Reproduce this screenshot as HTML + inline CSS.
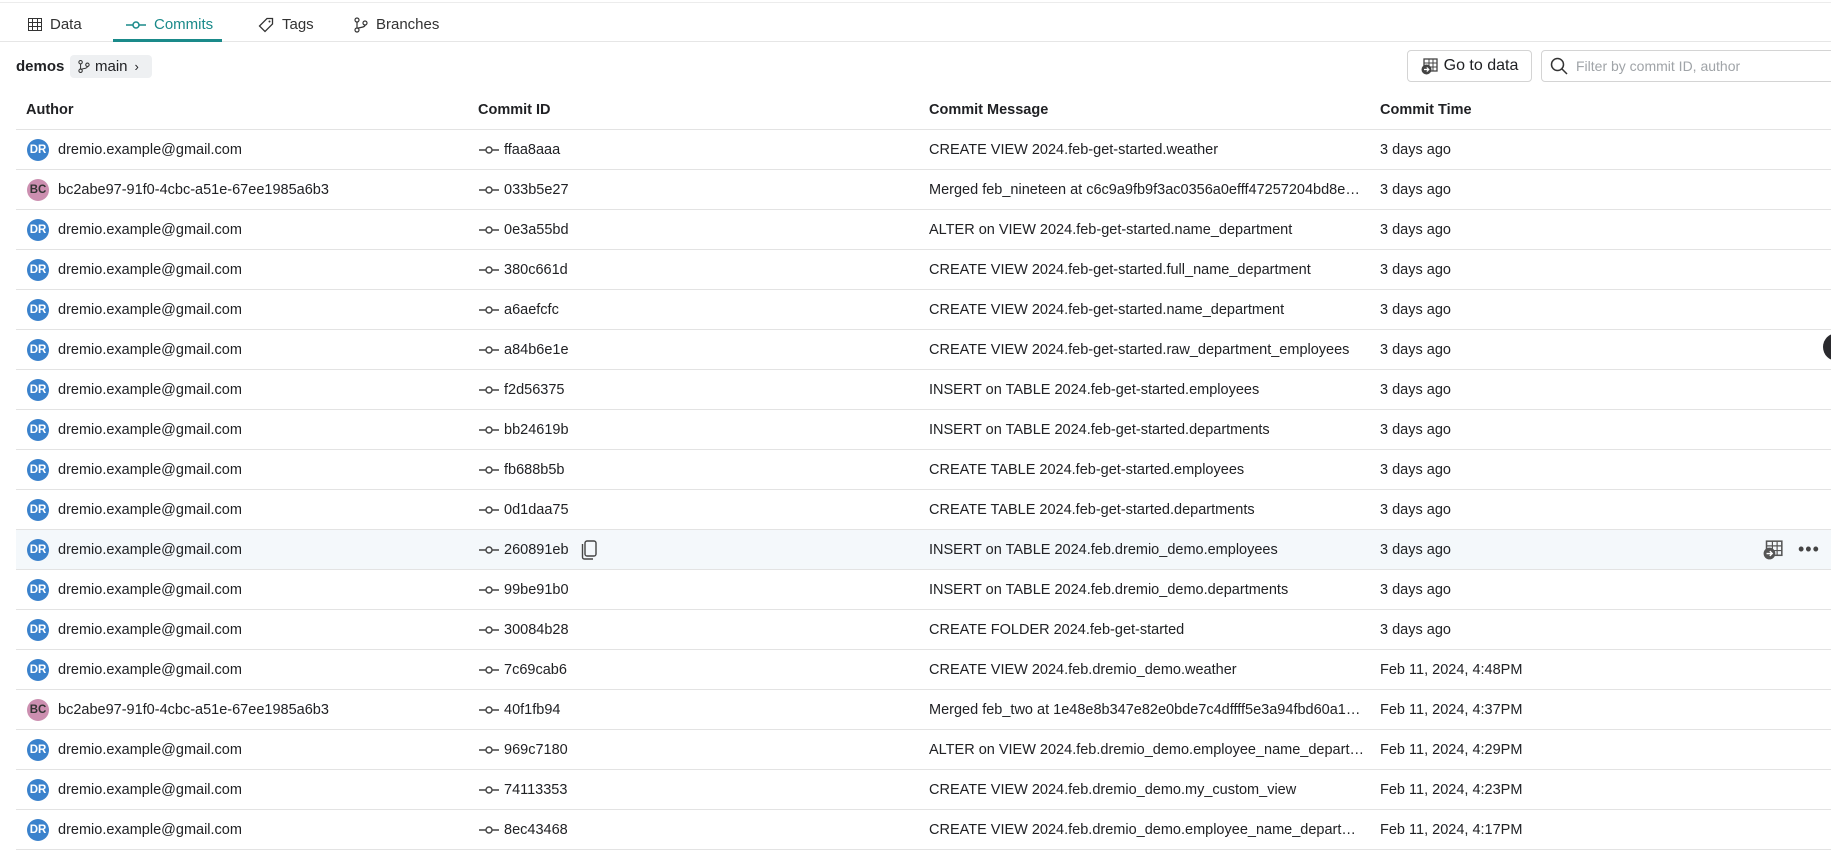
<!DOCTYPE html>
<html><head><meta charset="utf-8"><style>
*{box-sizing:border-box;margin:0;padding:0}
body{width:1831px;height:855px;overflow:hidden;background:#fff;font-family:"Liberation Sans",sans-serif;color:#202124;font-size:14.5px;position:relative}
.topline{position:absolute;left:0;right:0;top:2px;border-top:1px solid #ececec}
.tabs{position:absolute;left:0;right:0;top:0;height:42px;border-bottom:1px solid #e6e6e6}
.tab{position:absolute;top:16px;display:flex;align-items:center;gap:8px;font-size:15px;color:#333}
.tab.act{color:#1a8a8a}
.ul{position:absolute;left:113px;width:109px;top:39px;height:3px;background:#1a8a8a}
.demos{position:absolute;left:16px;top:58px;font-weight:bold;font-size:15px}
.pill{position:absolute;left:70px;top:55px;width:82px;height:23px;background:#eef0f2;border-radius:4px;display:flex;align-items:center;gap:5px;padding-left:8px;font-size:15px}
.btn{position:absolute;left:1407px;top:50px;width:125px;height:32px;border:1px solid #d4d4d4;border-radius:4px;display:flex;align-items:center;justify-content:center;gap:6px;font-size:16px}
.search{position:absolute;left:1541px;top:50px;width:300px;height:32px;border:1px solid #d4d4d4;border-radius:4px;display:flex;align-items:center;gap:8px;padding-left:8px;color:#a0a4a8;font-size:14px}
.row{position:absolute;left:16px;right:0;height:40px;border-bottom:1px solid #e3e3e3}
.c{position:absolute;top:0;height:39px;display:flex;align-items:center;white-space:nowrap}
.hd .c{font-weight:bold}
.av{width:22px;height:22px;border-radius:50%;background:#3b82cc;color:#fff;font-size:11.5px;font-weight:bold;display:flex;align-items:center;justify-content:center;margin-right:9px;flex:none}
.av.bc{background:#cc8fb0;color:#333}
.msg{overflow:hidden;text-overflow:ellipsis;width:437px;display:block}
.hov{background:#f4f8fb}
</style></head><body>
<div class="topline"></div>
<div class="tabs">
<div class="tab" style="left:28px"><svg width="14" height="13" viewBox="0 0 14 13"><rect x="0.5" y="0.5" width="13" height="12" fill="none" stroke="#333"/><path d="M0 4.5H14M0 8.5H14M4.5 0V13M9.5 0V13" stroke="#333"/></svg>Data</div>
<div class="tab act" style="left:126px"><svg width="20" height="10" viewBox="0 0 20 10"><path d="M0 5H6.5M13.5 5H20" stroke="#1a8a8a" stroke-width="1.5"/><circle cx="10" cy="5" r="3" fill="none" stroke="#1a8a8a" stroke-width="1.5"/></svg>Commits</div>
<div class="tab" style="left:258px"><svg width="16" height="16" viewBox="0 0 16 16"><path d="M9 1.5H14.5V7L7 14.5 1.5 9Z" fill="none" stroke="#333" stroke-width="1.3"/><circle cx="11.5" cy="4.5" r="1" fill="#333"/></svg>Tags</div>
<div class="tab" style="left:354px"><svg width="14" height="16" viewBox="0 0 14 16"><circle cx="3" cy="3" r="2" fill="none" stroke="#333" stroke-width="1.2"/><circle cx="3" cy="13" r="2" fill="none" stroke="#333" stroke-width="1.2"/><circle cx="11" cy="6" r="2" fill="none" stroke="#333" stroke-width="1.2"/><path d="M3 5V11M11 8C11 11 5 10 3.5 11.5" fill="none" stroke="#333" stroke-width="1.2"/></svg>Branches</div>
<div class="ul"></div>
</div>
<div class="demos">demos</div>
<div class="pill"><svg width="12" height="15" viewBox="0 0 14 16"><circle cx="3" cy="3" r="2" fill="none" stroke="#333" stroke-width="1.2"/><circle cx="3" cy="13" r="2" fill="none" stroke="#333" stroke-width="1.2"/><circle cx="11" cy="6" r="2" fill="none" stroke="#333" stroke-width="1.2"/><path d="M3 5V11M11 8C11 11 5 10 3.5 11.5" fill="none" stroke="#333" stroke-width="1.2"/></svg>main <span style="font-size:13px;margin-left:2px">›</span></div>
<div class="btn"><svg width="17" height="17" viewBox="0 0 17 17"><rect x="3" y="1" width="13" height="12" fill="none" stroke="#444" stroke-width="1.3"/><path d="M3 5H16M3 9H16M8 1V13M12 1V13" stroke="#444"/><circle cx="5.5" cy="11.5" r="5" fill="#444"/><path d="M3 11.5H7.5M5.8 9.5L7.8 11.5 5.8 13.5" stroke="#fff" stroke-width="1.2" fill="none"/></svg>Go to data</div>
<div class="search"><svg width="18" height="18" viewBox="0 0 18 18"><circle cx="7.5" cy="7.5" r="6" fill="none" stroke="#333" stroke-width="1.5"/><path d="M12 12L17 17" stroke="#333" stroke-width="1.5"/></svg>Filter by commit ID, author</div>
<div class="row hd" style="top:90px"><div class="c" style="left:10px">Author</div><div class="c" style="left:462px">Commit ID</div><div class="c" style="left:913px">Commit Message</div><div class="c" style="left:1364px">Commit Time</div></div>
<div id="rows"></div>
<script>
const R=[["DR","ffaa8aaa","CREATE VIEW 2024.feb-get-started.weather","3 days ago"],
["BC","033b5e27","Merged feb_nineteen at c6c9a9fb9f3ac0356a0efff47257204bd8e1f2a9b3c4d5e6f7","3 days ago"],
["DR","0e3a55bd","ALTER on VIEW 2024.feb-get-started.name_department","3 days ago"],
["DR","380c661d","CREATE VIEW 2024.feb-get-started.full_name_department","3 days ago"],
["DR","a6aefcfc","CREATE VIEW 2024.feb-get-started.name_department","3 days ago"],
["DR","a84b6e1e","CREATE VIEW 2024.feb-get-started.raw_department_employees","3 days ago"],
["DR","f2d56375","INSERT on TABLE 2024.feb-get-started.employees","3 days ago"],
["DR","bb24619b","INSERT on TABLE 2024.feb-get-started.departments","3 days ago"],
["DR","fb688b5b","CREATE TABLE 2024.feb-get-started.employees","3 days ago"],
["DR","0d1daa75","CREATE TABLE 2024.feb-get-started.departments","3 days ago"],
["DR","260891eb","INSERT on TABLE 2024.feb.dremio_demo.employees","3 days ago"],
["DR","99be91b0","INSERT on TABLE 2024.feb.dremio_demo.departments","3 days ago"],
["DR","30084b28","CREATE FOLDER 2024.feb-get-started","3 days ago"],
["DR","7c69cab6","CREATE VIEW 2024.feb.dremio_demo.weather","Feb 11, 2024, 4:48PM"],
["BC","40f1fb94","Merged feb_two at 1e48e8b347e82e0bde7c4dffff5e3a94fbd60a1b2c3d4e5f6","Feb 11, 2024, 4:37PM"],
["DR","969c7180","ALTER on VIEW 2024.feb.dremio_demo.employee_name_department","Feb 11, 2024, 4:29PM"],
["DR","74113353","CREATE VIEW 2024.feb.dremio_demo.my_custom_view","Feb 11, 2024, 4:23PM"],
["DR","8ec43468","CREATE VIEW 2024.feb.dremio_demo.employee_name_department","Feb 11, 2024, 4:17PM"]];
const ci='<svg width="20" height="10" viewBox="0 0 20 10" style="margin-right:5px"><path d="M0 5H6.5M13.5 5H20" stroke="#444" stroke-width="1.4"/><circle cx="10" cy="5" r="3" fill="none" stroke="#444" stroke-width="1.4"/></svg>';
let h='';
R.forEach((r,i)=>{const top=130+i*40;const hov=i==10;
const auth=r[0]=="DR"?"dremio.example@gmail.com":"bc2abe97-91f0-4cbc-a51e-67ee1985a6b3";
h+=`<div class="row${hov?' hov':''}" style="top:${top}px"><div class="c" style="left:11px"><div class="av${r[0]=='BC'?' bc':''}">${r[0]}</div>${auth}</div><div class="c" style="left:463px">${ci}${r[1]}${hov?'<svg width="16" height="20" viewBox="0 0 16 20" style="margin-left:12px"><rect x="4" y="1" width="11" height="15" rx="2" fill="none" stroke="#444" stroke-width="1.4"/><path d="M1.5 4V17Q1.5 19 3.5 19H12" fill="none" stroke="#444" stroke-width="1.4"/></svg>':''}</div><div class="c" style="left:913px"><span class="msg">${r[2]}</span></div><div class="c" style="left:1364px">${r[3]}</div>${hov?'<div class="c" style="left:1747px"><svg width="20" height="20" viewBox="0 0 17 17"><rect x="3" y="1" width="13" height="12" fill="none" stroke="#555" stroke-width="1.3"/><path d="M3 5H16M3 9H16M8 1V13M12 1V13" stroke="#555"/><circle cx="5.5" cy="11.5" r="5" fill="#555"/><path d="M3 11.5H7.5M5.8 9.5L7.8 11.5 5.8 13.5" stroke="#fff" stroke-width="1.2" fill="none"/></svg></div><div class="c" style="left:1782px;font-size:18px;letter-spacing:1px;color:#444">•••</div>':''}</div>`;});
document.getElementById('rows').innerHTML=h;
</script>
<div style="position:absolute;left:1823px;top:333px;width:28px;height:28px;border-radius:50%;background:#2a2a2e"></div>
</body></html>
